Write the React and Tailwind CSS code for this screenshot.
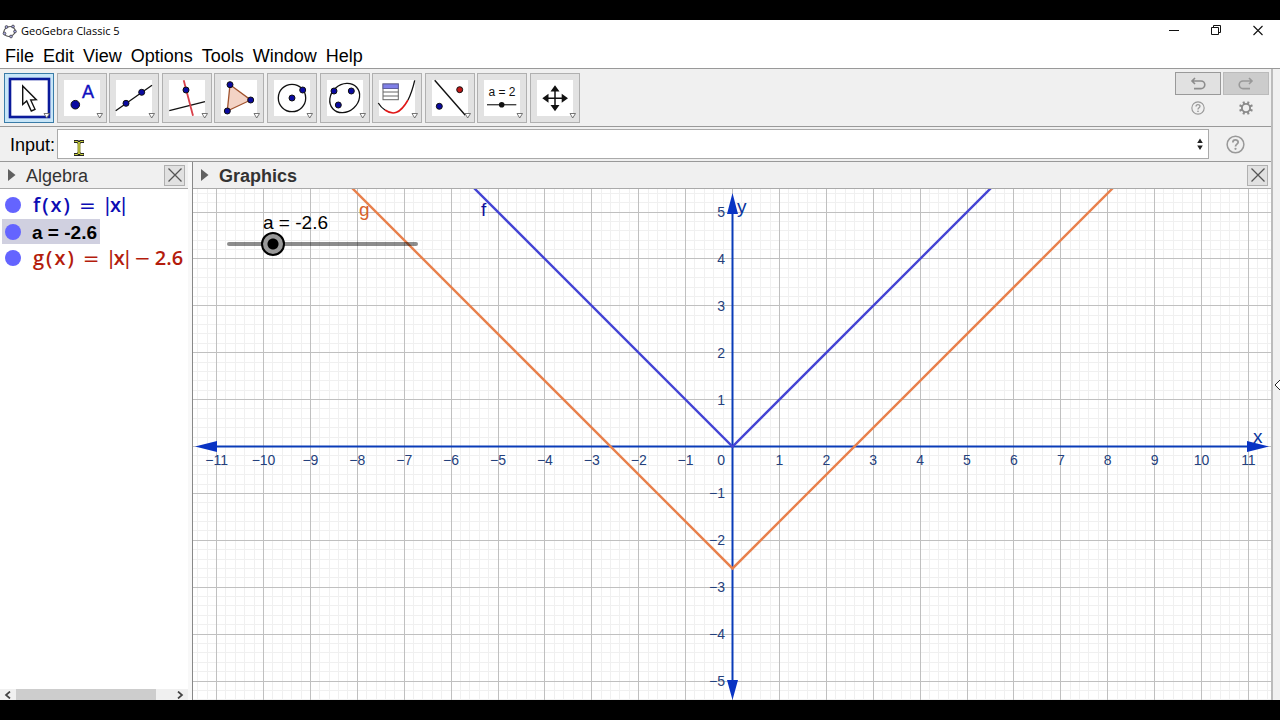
import { useState } from "react";

const NAVY = "#0a0aa0";

// graph view, in pixels: origin and length of one unit
const VIEW = { width: 1078, height: 511, ox: 539.5, oy: 257.5, unit: 46.9 };

const menus = ["File", "Edit", "View", "Options", "Tools", "Window", "Help"];

function Dot({ x, y, r = 3, fill = NAVY }) {
  return <circle cx={x} cy={y} r={r} fill={fill} stroke="#111" strokeWidth="1" />;
}

const tools = [
  {
    name: "Move",
    icon: (
      <path
        d="M18.7 13V31.5L22.7 28L27.3 38L31 36.3L26.7 27L32.3 26.7Z"
        fill="#fff"
        stroke="#111"
        strokeWidth="1.4"
      />
    ),
  },
  {
    name: "Point",
    icon: (
      <>
        <Dot x={18.3} y={31.7} r={4.3} />
        <text x="25" y="25" fontSize="18" fill="#1010c0" stroke="#1010c0" strokeWidth="0.4">
          A
        </text>
      </>
    ),
  },
  {
    name: "Line",
    icon: (
      <>
        <path d="M6.7 37.7L43 12.3" stroke="#111" strokeWidth="1.3" />
        <Dot x={17} y={30.3} />
        <Dot x={32.7} y={19.3} />
      </>
    ),
  },
  {
    name: "Perpendicular Line",
    icon: (
      <>
        <path d="M7.3 37.7L43 28.7" stroke="#111" strokeWidth="1.3" />
        <path d="M21.7 7.3L31 42.7" stroke="#d8404a" strokeWidth="1.8" />
        <Dot x={24} y={17} />
      </>
    ),
  },
  {
    name: "Polygon",
    icon: (
      <>
        <path d="M16 11.7L36.7 27L13.3 38Z" fill="#f3d3c5" stroke="#a0522d" strokeWidth="1.3" />
        <Dot x={16} y={11.7} />
        <Dot x={36.7} y={27} />
        <Dot x={13.3} y={38} />
      </>
    ),
  },
  {
    name: "Circle with Center",
    icon: (
      <>
        <circle cx="25" cy="25" r="13.7" fill="none" stroke="#111" strokeWidth="1.3" />
        <Dot x={25} y={25} />
        <Dot x={35.7} y={17} />
      </>
    ),
  },
  {
    name: "Ellipse",
    icon: (
      <>
        <ellipse
          cx="24.7"
          cy="25"
          rx="16"
          ry="13.5"
          transform="rotate(-42 24.7 25)"
          fill="none"
          stroke="#111"
          strokeWidth="1.3"
        />
        <Dot x={14} y={18} />
        <Dot x={31.3} y={18} />
        <Dot x={18.3} y={32} />
      </>
    ),
  },
  {
    name: "Function Inspector",
    icon: (
      <>
        <rect x="11" y="11" width="15.3" height="15.7" fill="#fff" stroke="#666" />
        <rect x="11" y="11" width="15.3" height="4.5" fill="#8080e8" stroke="#6060a0" />
        <path d="M11 19H26.3M11 23H26.3" stroke="#666" />
        <path d="M6.3 30Q9 34.5 13 37" fill="none" stroke="#111" strokeWidth="1.3" />
        <path d="M13 37C21 42.5 28 41 36 27" fill="none" stroke="#e01818" strokeWidth="1.6" />
        <path d="M36 27Q40 19 42.7 7.3" fill="none" stroke="#111" strokeWidth="1.3" />
      </>
    ),
  },
  {
    name: "Reflect about Line",
    icon: (
      <>
        <path d="M9.7 7.3L40.3 42.3" stroke="#111" strokeWidth="1.4" />
        <Dot x={34.7} y={16.7} fill="#c01818" />
        <Dot x={14.3} y={33.3} />
      </>
    ),
  },
  {
    name: "Slider",
    icon: (
      <>
        <text x="25" y="23" fontSize="12" textAnchor="middle" fill="#111">
          a = 2
        </text>
        <path d="M10 31.7H39.3" stroke="#444" strokeWidth="1.4" />
        <circle cx="24.7" cy="31.7" r="2.8" fill="#111" />
      </>
    ),
  },
  {
    name: "Move Graphics View",
    icon: (
      <>
        <path d="M16 25.3H34M25 16V34" stroke="#111" strokeWidth="1.5" />
        <path
          d="M12.3 25.3L18.5 20.8V29.8ZM38 25.3L31.7 20.8V29.8ZM25 12.3L20.5 18.5H29.5ZM25 38.3L20.5 32H29.5Z"
          fill="#111"
        />
      </>
    ),
  },
];

function ToolButton({ tool, selected, onSelect }) {
  return (
    <button
      type="button"
      aria-label={tool.name}
      aria-pressed={selected}
      onClick={onSelect}
      className={
        selected
          ? "size-[50px] shrink-0 border border-[#3a7ca8] bg-[#c8e6f8]"
          : "size-[50px] shrink-0 border border-[#b0b0b0] bg-[#e2e2e2]"
      }
    >
      <svg viewBox="1 1 48 48" className="block size-12">
        <rect x="7" y="7" width="36" height="36" fill="#fff" />
        {selected && (
          <rect x="6" y="6" width="39" height="38" fill="#fff" stroke="#0a1a9a" strokeWidth="2.6" />
        )}
        {tool.icon}
        <path d="M40 40.5H45.5L42.7 45Z" fill="#fff" stroke="#666" strokeWidth="0.9" />
      </svg>
    </button>
  );
}

function HelpIcon({ className }) {
  return (
    <svg viewBox="0 0 20 20" className={className}>
      <circle cx="10" cy="10" r="8.8" fill="none" stroke="#999" strokeWidth="1.6" />
      <path
        d="M7.2 7.8C7.2 4.4 12.8 4.4 12.8 7.6C12.8 9.6 10 9.6 10 12"
        fill="none"
        stroke="#999"
        strokeWidth="1.9"
      />
      <circle cx="10" cy="14.6" r="1.2" fill="#999" />
    </svg>
  );
}

function GearIcon() {
  const teeth = [0, 45, 90, 135, 180, 225, 270, 315];
  return (
    <svg viewBox="0 0 16 16" className="size-4">
      <circle cx="8" cy="8" r="4.1" fill="none" stroke="#8c8c8c" strokeWidth="1.9" />
      {teeth.map((angle) => (
        <path
          key={angle}
          d="M8 4V1"
          transform={`rotate(${angle + 22.5} 8 8)`}
          stroke="#8c8c8c"
          strokeWidth="2.1"
        />
      ))}
    </svg>
  );
}

function TitleBar() {
  return (
    <header className="flex h-[22px] items-center justify-between bg-white">
      <div className="flex items-center gap-1 pl-[2px]">
        <svg viewBox="0 0 15 15" className="size-[15px]">
          <ellipse
            cx="7.5"
            cy="7.5"
            rx="5.8"
            ry="4.8"
            transform="rotate(-20 7.5 7.5)"
            fill="none"
            stroke="#555"
            strokeWidth="1.1"
          />
          {[[4.5, 3], [11, 2.5], [13, 7.5], [9, 12.5], [2.5, 9.5]].map(([x, y]) => (
            <circle key={x} cx={x} cy={y} r="1.4" fill="#a8a8e0" stroke="#333" strokeWidth="0.7" />
          ))}
        </svg>
        <h1 className="font-['Open_Sans',sans-serif] text-[11px] leading-4">GeoGebra Classic 5</h1>
      </div>
      <div className="flex items-center gap-[26px] pr-[14px]">
        <button type="button" aria-label="Minimize" className="size-4">
          <svg viewBox="0 0 16 16" className="size-4">
            <path d="M3 7.5H13" stroke="#111" />
          </svg>
        </button>
        <button type="button" aria-label="Restore" className="size-4">
          <svg viewBox="0 0 16 16" className="size-4">
            <path d="M3.5 4.5H10.5V11.5H3.5ZM5.5 4.5V2.5H12.5V9.5H10.5" fill="none" stroke="#111" />
          </svg>
        </button>
        <button type="button" aria-label="Close" className="size-4">
          <svg viewBox="0 0 16 16" className="size-4">
            <path d="M3.5 3L12.5 12M12.5 3L3.5 12" stroke="#111" strokeWidth="1.1" />
          </svg>
        </button>
      </div>
    </header>
  );
}

function ToolBar() {
  const [selected, setSelected] = useState("Move");

  return (
    <div className="flex h-[58px] justify-between border-b border-[#999] pr-[2px] pl-1">
      <div className="flex w-[576px] items-center justify-between">
        {tools.map((tool) => (
          <ToolButton
            key={tool.name}
            tool={tool}
            selected={tool.name === selected}
            onSelect={() => setSelected(tool.name)}
          />
        ))}
      </div>
      <div className="grid grid-cols-2 content-start justify-items-center gap-x-[2px] gap-y-[5px] pt-[3px]">
        <button
          type="button"
          aria-label="Undo"
          className="flex h-[23px] w-[46px] items-center justify-center border border-[#999] bg-[#e1e1e1]"
        >
          <svg viewBox="0 0 16 14" className="h-[14px] w-4">
            <path d="M2 4H11A3.8 3.8 0 0 1 11 11.6H4M5 1L2 4L5 7" fill="none" stroke="#8c8c8c" strokeWidth="1.6" />
          </svg>
        </button>
        <button
          type="button"
          aria-label="Redo"
          className="flex h-[23px] w-[46px] items-center justify-center border border-[#bbb] bg-[#ccc]"
        >
          <svg viewBox="0 0 16 14" className="h-[14px] w-4">
            <path d="M14 4H5A3.8 3.8 0 0 0 5 11.6H12M11 1L14 4L11 7" fill="none" stroke="#999" strokeWidth="1.6" />
          </svg>
        </button>
        <button type="button" aria-label="Help" className="flex size-4 items-center justify-center">
          <HelpIcon className="size-[14px]" />
        </button>
        <button type="button" aria-label="Settings" className="size-4">
          <GearIcon />
        </button>
      </div>
    </div>
  );
}

function InputBar() {
  return (
    <div className="flex h-[35px] items-center border-b border-[#999] pl-[10px]">
      <label htmlFor="command" className="w-[47px] pt-[2px] text-lg leading-6">
        Input:
      </label>
      <div className="relative flex h-[30px] flex-1 items-center border border-[#aaa] bg-white">
        <input id="command" type="text" className="h-full min-w-0 flex-1 px-2 text-lg outline-none" />
        <button type="button" aria-label="Input history" className="flex h-full w-4 items-center justify-center">
          <svg viewBox="0 0 8 12" className="h-3 w-2">
            <path d="M1.2 5L4 0.5L6.8 5ZM1.2 7.5H6.8L4 12Z" fill="#222" />
          </svg>
        </button>
        {/* text cursor */}
        <svg viewBox="0 0 12 18" className="pointer-events-none absolute top-[9px] left-[15px] h-[18px] w-3">
          <path d="M1 2.5H4.5L6 4L7.5 2.5H11M1 15.5H4.5L6 14L7.5 15.5H11" fill="none" stroke="#222" strokeWidth="3" />
          <path d="M6 3V15" stroke="#8a8a30" strokeWidth="3" />
          <path d="M1.5 2.5H4.5L6 4V14L4.5 15.5H1.5M6 4L7.5 2.5H10.5M6 14L7.5 15.5H10.5" fill="none" stroke="#d0d840" />
        </svg>
      </div>
      <button type="button" aria-label="Input help" className="flex w-[62px] justify-center pr-[10px]">
        <HelpIcon className="size-[19px]" />
      </button>
    </div>
  );
}

function PanelHeader({ title, bold }) {
  return (
    <div className="flex h-[27px] items-center border-b border-[#aaa] bg-[#f0f0f0] pr-[3px] pl-2">
      <button type="button" aria-label={`${title} style bar`} className="w-[18px]">
        <svg viewBox="0 0 8 12" className="h-3 w-2">
          <path d="M0 0L7.5 6L0 12Z" fill="#606060" />
        </svg>
      </button>
      <h2
        className={
          bold
            ? "flex-1 pt-[2px] text-lg leading-6 font-bold text-[#333]"
            : "flex-1 pt-[2px] text-lg leading-6 text-[#333]"
        }
      >
        {title}
      </h2>
      <button
        type="button"
        aria-label={`Close ${title}`}
        className="flex size-[21px] items-center justify-center border border-[#b0b0b0] bg-[#e1e1e1]"
      >
        <svg viewBox="0 0 16 16" className="size-4">
          <path d="M1.5 1.5L14.5 14.5M14.5 1.5L1.5 14.5" stroke="#555" strokeWidth="1.3" />
        </svg>
      </button>
    </div>
  );
}

function Marble({ label }) {
  return <button type="button" aria-label={label} className="size-4 shrink-0 rounded-full bg-[#6464ff]" />;
}

function Bar() {
  return <span className="font-['Liberation_Sans',sans-serif] font-normal">|</span>;
}

function Formula({ name, children }) {
  return (
    <>
      <span className="flex gap-[2px]">
        <span>{name}</span>
        <span>(</span>
        <span>x</span>
        <span>)</span>
      </span>
      <span className="font-['DejaVu_Sans',sans-serif] font-normal">=</span>
      <span className="flex">
        <Bar />
        x
        <Bar />
        {children}
      </span>
    </>
  );
}

function AlgebraView({ a }) {
  return (
    <aside className="flex w-[188px] shrink-0 flex-col bg-white">
      <PanelHeader title="Algebra" />
      <ul className="flex-1 overflow-hidden pt-[2px] whitespace-nowrap">
        <li className="flex h-7 items-center gap-3 pl-[5px]">
          <Marble label="Show f" />
          <span className="flex gap-[9px] font-['Open_Sans',sans-serif] text-xl leading-6 font-semibold text-[#0c0cb4]">
            <Formula name="f" />
          </span>
        </li>
        <li className="ml-[2px] flex h-[25px] w-[98px] items-center gap-[11px] bg-[#d0d0e0] pl-[3px]">
          <Marble label="Show a" />
          <span className="pt-[2px] text-[19px] leading-6 font-bold">a = {a}</span>
        </li>
        <li className="flex h-7 items-center gap-3 pl-[5px]">
          <Marble label="Show g" />
          <span className="flex gap-[9px] font-['Open_Sans',sans-serif] text-xl leading-6 font-semibold text-[#b41c0c]">
            <Formula name="g">
              <span className="px-1 font-['DejaVu_Sans',sans-serif] font-normal">{a < 0 ? "−" : "+"}</span>
              {Math.abs(a)}
            </Formula>
          </span>
        </li>
      </ul>
      <div className="flex h-[11px] items-center justify-between bg-[#f0f0f0]">
        <button type="button" aria-label="Scroll left" className="flex h-full w-4 items-center justify-center">
          <svg viewBox="0 0 8 8" className="size-2">
            <path d="M6 0.5L2 4L6 7.5" fill="none" stroke="#444" strokeWidth="1.7" />
          </svg>
        </button>
        <div className="h-full flex-1">
          <div className="h-full w-[140px] bg-[#cdcdcd]" />
        </div>
        <button type="button" aria-label="Scroll right" className="flex h-full w-4 items-center justify-center">
          <svg viewBox="0 0 8 8" className="size-2">
            <path d="M2 0.5L6 4L2 7.5" fill="none" stroke="#444" strokeWidth="1.7" />
          </svg>
        </button>
      </div>
    </aside>
  );
}

function Plot({ a }) {
  const { width, height, ox, oy, unit } = VIEW;
  const px = (x) => ox + x * unit;
  const py = (y) => oy - y * unit;
  const label = (n) => (n < 0 ? `−${-n}` : `${n}`);

  const minorX = Array.from({ length: 115 }, (_, i) => (i - 57) / 5);
  const minorY = Array.from({ length: 55 }, (_, i) => (i - 27) / 5);
  const majorX = Array.from({ length: 23 }, (_, i) => i - 11);
  const majorY = Array.from({ length: 11 }, (_, i) => i - 5);

  const graph = (shift) => `M${px(-12)} ${py(12 + shift)}L${px(0)} ${py(shift)}L${px(12)} ${py(12 + shift)}`;

  return (
    <svg viewBox={`0 0 ${width} ${height}`} preserveAspectRatio="xMidYMid slice" className="block size-full">
      <g shapeRendering="crispEdges">
        {minorX.map((x) => (
          <line key={x} x1={px(x)} x2={px(x)} y1="0" y2={height} stroke="#f0f0f0" />
        ))}
        {minorY.map((y) => (
          <line key={y} x1="0" x2={width} y1={py(y)} y2={py(y)} stroke="#f0f0f0" />
        ))}
        {majorX.map((x) => (
          <line key={x} x1={px(x)} x2={px(x)} y1="0" y2={height} stroke="#c0c0c0" />
        ))}
        {majorY.map((y) => (
          <line key={y} x1="0" x2={width} y1={py(y)} y2={py(y)} stroke="#c0c0c0" />
        ))}
      </g>

      {/* axes */}
      <path d={`M10 ${oy}H${width - 10}M${ox} 10V${height - 10}`} stroke="#0a3cb8" strokeWidth="2" />
      <path
        d="M2 257.5L24 252V263ZM1076 257.5L1054 252V263ZM539.5 4L534 25H545ZM539.5 511L534 491H545Z"
        fill="#0a34c4"
      />

      {/* graphs */}
      <path d={graph(a)} fill="none" stroke="#e8804c" strokeWidth="2.4" />
      <path d={graph(0)} fill="none" stroke="#4444d4" strokeWidth="2.4" />

      <g fontSize="14" fill="#24407c">
        {majorX
          .filter((x) => x !== 0)
          .map((x) => (
            <text key={x} x={px(x)} y={oy + 18} textAnchor="middle">
              {label(x)}
            </text>
          ))}
        <text x="532" y={oy + 18} textAnchor="end">
          0
        </text>
        {majorY
          .filter((y) => y !== 0)
          .map((y) => (
            <text key={y} x="532" y={py(y) + 5} textAnchor="end">
              {label(y)}
            </text>
          ))}
      </g>
      <g fontSize="19">
        <text x="1060" y="254" fill="#0a349c">
          x
        </text>
        <text x="544" y="24" fill="#0a349c">
          y
        </text>
        <text x="288" y="27" fill="#10109c">
          f
        </text>
        <text x="166" y="27" fill="#d8602c">
          g
        </text>
      </g>
    </svg>
  );
}

function GraphicsView({ a, onChange }) {
  return (
    <main className="flex min-w-0 flex-1 flex-col border-l border-[#888] bg-white">
      <PanelHeader title="Graphics" bold />
      <div className="relative min-h-0 flex-1 overflow-hidden">
        <Plot a={a} />
        <div className="absolute top-[22px] left-[22px] w-[215px]">
          <label htmlFor="slider-a" className="block pl-12 text-[19px] leading-6">
            a = {a}
          </label>
          <div className="relative flex h-[18px] items-center px-3">
            <div className="h-1 flex-1 rounded-full bg-black/45" />
            <input
              id="slider-a"
              type="range"
              min="-5"
              max="5"
              step="0.1"
              value={a}
              onChange={(e) => onChange(Number(e.target.value))}
              className="absolute inset-0 w-full appearance-none bg-transparent [&::-webkit-slider-thumb]:size-6 [&::-webkit-slider-thumb]:appearance-none [&::-webkit-slider-thumb]:rounded-full [&::-webkit-slider-thumb]:border-2 [&::-webkit-slider-thumb]:border-black [&::-webkit-slider-thumb]:bg-[radial-gradient(circle,#000_5px,#999_6px)]"
            />
          </div>
        </div>
      </div>
    </main>
  );
}

function App() {
  const [a, setA] = useState(-2.6);

  return (
    <div className="flex h-screen flex-col bg-black py-5 font-['Liberation_Sans',Arial,sans-serif] text-black">
      <TitleBar />
      <nav className="flex h-[26px] items-center gap-[9px] bg-white pt-[2px] pl-[5px] text-lg leading-6">
        {menus.map((menu) => (
          <button key={menu} type="button">
            {menu}
          </button>
        ))}
      </nav>
      <div className="flex min-h-0 flex-1 border-t border-[#999] bg-[#f0f0f0]">
        <div className="flex min-w-0 flex-1 flex-col">
          <ToolBar />
          <InputBar />
          <div className="flex min-h-0 flex-1">
            <AlgebraView a={a} />
            <div className="w-1 shrink-0 bg-[#f8f8f8]" />
            <GraphicsView a={a} onChange={setA} />
          </div>
        </div>
        {/* collapsed side panel */}
        <div className="flex w-[9px] shrink-0 items-center justify-end border-l-2 border-[#bbb]">
          <button type="button" aria-label="Open side panel">
            <svg viewBox="0 0 6 12" className="h-3 w-[6px]">
              <path d="M6 1L1 6L6 11" fill="#fff" stroke="#222" />
            </svg>
          </button>
        </div>
      </div>
    </div>
  );
}

export default App;
